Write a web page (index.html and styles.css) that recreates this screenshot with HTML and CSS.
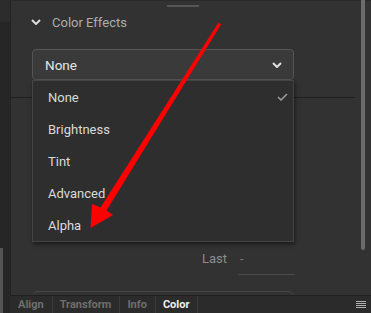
FILE: index.html
```html
<!DOCTYPE html>
<html lang="en">
<head>
    <meta charset="UTF-8">
    <title>Color Effects</title>
    <link rel="stylesheet" href="styles.css">
</head>
<body>

    <div class="side">
        <div class="side-top"></div>
        <div class="side-grip"></div>
    </div>

    <div class="panel">
        <div class="panel-body">
            <div class="content">
                <div class="handle"></div>

                <div class="section-head">
                    <svg class="chev" width="10" height="6" viewBox="0 0 10 6"><path d="M1 1l4 4 4-4" stroke="#dcdcdc" stroke-width="2" fill="none"/></svg>
                    <span>Color Effects</span>
                </div>

                <div class="select">
                    <span>None</span>
                    <svg width="10" height="6" viewBox="0 0 10 6"><path d="M1 1l4 4 4-4" stroke="#e0e0e0" stroke-width="2" fill="none"/></svg>
                </div>

                <div class="rule"></div>

                <div class="field-row">
                    <span class="field-label">Last</span>
                    <span class="field">-</span>
                </div>

                <div class="group-box"></div>
            </div>
            <div class="scroll">
                <div class="thumb"></div>
            </div>
        </div>

        <div class="tabs">
            <span class="tab">Align</span>
            <span class="tab">Transform</span>
            <span class="tab">Info</span>
            <span class="tab active">Color</span>
            <span class="menu-btn"><i></i><i></i><i></i><i></i></span>
        </div>

        <!-- open dropdown list -->
        <ul class="menu">
            <li>None <svg width="11" height="8" viewBox="0 0 11 8"><path d="M1 4l3 3 6-6" stroke="#9a9a9a" stroke-width="1.6" fill="none"/></svg></li>
            <li>Brightness</li>
            <li>Tint</li>
            <li>Advanced</li>
            <li>Alpha</li>
        </ul>
    </div>

    <svg class="arrow" width="371" height="313" viewBox="0 0 371 313">
        <polygon points="218.5,22.5 221,24.5 106.5,210.5 113,215 90.5,228 92,204 100.5,207.5" fill="#ff0000"/>
    </svg>

</body>
</html>
```

FILE: styles.css
```css
body {
    margin: 0;
    height: 313px;
    overflow: hidden;
    display: flex;
    position: relative;
    background-color: #262626;
    font-family: Roboto, 'Noto Sans', sans-serif;
    font-size: 13px;
}
.side {
    width: 10px;
    display: flex;
    flex-direction: column;
    background-color: #262626;
}
.side-top {
    height: 22px;
    background-color: #2c2c2c;
}
.side-grip {
    margin-top: auto;
    width: 3px;
    height: 65px;
    background-color: #555;
}
.panel {
    flex: 1;
    display: flex;
    flex-direction: column;
    position: relative;
}
.panel-body {
    flex: 1;
    display: flex;
    background-color: #323232;
    border-top: 1px solid #2a2a2a;
    border-left: 1px solid #222;
    min-height: 0;
}
.content {
    flex: 1;
    overflow: hidden;
}
.handle {
    width: 32px;
    height: 2px;
    margin: 4px auto 0;
    background-color: #555;
}
.section-head {
    display: flex;
    align-items: center;
    gap: 11px;
    height: 18px;
    margin-top: 6px;
    padding-left: 20px;
    color: #adadad;
}
.select {
    display: flex;
    align-items: center;
    justify-content: space-between;
    box-sizing: border-box;
    width: 262px;
    height: 31px;
    margin: 18px 0 0 21px;
    padding: 0 11px 0 12px;
    background-color: #3a3a3a;
    border: 1px solid #555;
    border-radius: 4px;
    color: #e6e6e6;
    font-size: 13.5px;
}
.rule {
    height: 1px;
    margin-top: 17px;
    background-color: #1f1f1f;
}
.field-row {
    display: flex;
    justify-content: flex-end;
    gap: 11px;
    width: 284px;
    margin-top: 153px;
}
.field-label {
    line-height: 16px;
    color: #8c8c8c;
}
.field {
    box-sizing: border-box;
    width: 57px;
    height: 24px;
    padding-left: 2px;
    line-height: 16px;
    color: #777;
    border-bottom: 1px solid #4a4a4a;
}
.group-box {
    width: 262px;
    height: 30px;
    margin: 16px 0 0 21px;
    box-sizing: border-box;
    border: 1px solid #474747;
    border-radius: 6px;
}
.scroll {
    width: 16px;
}
.thumb {
    width: 4px;
    height: 250px;
    margin-top: -1px;
    margin-left: 6px;
    background-color: #6b6b6b;
    border-radius: 0 0 2px 2px;
}
.tabs {
    height: 17px;
    display: flex;
    align-items: center;
    padding-left: 1px;
    background-color: #2b2b2b;
    border-top: 1px solid #1f1f1f;
    font-size: 11px;
    font-weight: bold;
}
.tab {
    height: 17px;
    line-height: 17px;
    padding: 0 8px 0 7px;
    border-right: 1px solid #3c3c3c;
    color: #6e6e6e;
}
.tab.active {
    color: #f0f0f0;
}
.menu-btn {
    margin-left: auto;
    margin-right: 5px;
    display: flex;
    flex-direction: column;
    gap: 1px;
}
.menu-btn i {
    display: block;
    width: 10px;
    height: 1px;
    background-color: #b0b0b0;
}
.menu {
    position: absolute;
    left: 22px;
    top: 80px;
    width: 262px;
    box-sizing: border-box;
    margin: 0;
    padding: 0;
    list-style: none;
    background-color: #2e2e2e;
    border: 1px solid #444;
    box-shadow: 1px 2px 4px rgba(0, 0, 0, 0.5);
    color: #dadada;
}
.menu li {
    height: 32px;
    display: flex;
    align-items: center;
    justify-content: space-between;
    padding: 0 5px 0 15px;
}
.arrow {
    position: absolute;
    left: 0;
    top: 0;
    pointer-events: none;
}
```
